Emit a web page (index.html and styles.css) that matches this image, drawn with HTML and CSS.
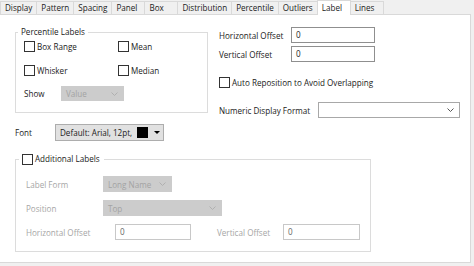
FILE: index.html
```html
<!DOCTYPE html>
<html lang="en">
<head>
    <meta charset="UTF-8">
    <meta name="viewport" content="width=device-width, initial-scale=1.0">
    <title>Box Chart Options - Label</title>
    <link rel="stylesheet" href="styles.css">
</head>
<body>
    <div id="tabs">
        <div class="tab">Display</div>
        <div class="tab">Pattern</div>
        <div class="tab">Spacing</div>
        <div class="tab">Panel</div>
        <div class="tab">Box</div>
        <div class="tab">Distribution</div>
        <div class="tab">Percentile</div>
        <div class="tab">Outliers</div>
        <div class="tab active">Label</div>
        <div class="tab">Lines</div>
    </div>

    <div id="page">
        <div class="top">
            <fieldset class="group percentile">
                <legend>Percentile Labels</legend>
                <div class="checks">
                    <label class="check"><span class="box"></span>Box Range</label>
                    <label class="check"><span class="box"></span>Mean</label>
                    <label class="check"><span class="box"></span>Whisker</label>
                    <label class="check"><span class="box"></span>Median</label>
                </div>
                <div class="show-row">
                    <span class="show-label">Show</span>
                    <div class="combo disabled combo-value">
                        <span>Value</span>
                        <svg width="7" height="4" viewBox="0 0 7 4"><path d="M0.5 0.5 L3.5 3.5 L6.5 0.5" fill="none" stroke="currentColor"/></svg>
                    </div>
                </div>
            </fieldset>

            <div class="side">
                <div class="field-row">
                    <span class="side-label">Horizontal Offset</span>
                    <div class="textbox offset">0</div>
                </div>
                <div class="field-row">
                    <span class="side-label">Vertical Offset</span>
                    <div class="textbox offset">0</div>
                </div>
                <label class="check auto"><span class="box"></span>Auto Reposition to Avoid Overlapping</label>
                <div class="field-row numeric">
                    <span class="numeric-label">Numeric Display Format</span>
                    <div class="combo combo-format">
                        <span></span>
                        <svg width="7" height="4" viewBox="0 0 7 4"><path d="M0.5 0.5 L3.5 3.5 L6.5 0.5" fill="none" stroke="currentColor"/></svg>
                    </div>
                </div>
            </div>
        </div>

        <div class="font-row">
            <span class="font-label">Font</span>
            <div class="font-button">
                <span>Default: Arial, 12pt,</span>
                <span class="swatch"></span>
                <span class="caret"></span>
            </div>
        </div>

        <fieldset class="group additional">
            <legend><label class="check"><span class="box"></span>Additional Labels</label></legend>
            <div class="form-grid">
                <span class="muted">Label Form</span>
                <div class="combo disabled combo-form">
                    <span>Long Name</span>
                    <svg width="7" height="4" viewBox="0 0 7 4"><path d="M0.5 0.5 L3.5 3.5 L6.5 0.5" fill="none" stroke="currentColor"/></svg>
                </div>
                <span class="muted">Position</span>
                <div class="combo disabled combo-position">
                    <span>Top</span>
                    <svg width="7" height="4" viewBox="0 0 7 4"><path d="M0.5 0.5 L3.5 3.5 L6.5 0.5" fill="none" stroke="currentColor"/></svg>
                </div>
            </div>
            <div class="offset-row">
                <span class="muted h-label">Horizontal Offset</span>
                <div class="textbox disabled-box h-input">0</div>
                <span class="muted v-label">Vertical Offset</span>
                <div class="textbox disabled-box v-input">0</div>
            </div>
        </fieldset>
    </div>
</body>
</html>
```

FILE: styles.css
```css
body {
    margin: 0;
    width: 474px;
    height: 266px;
    background: #f0f0f0;
    font-family: "Open Sans", "Noto Sans", sans-serif;
    font-size: 8.1px;
    color: #1a1a1a;
    white-space: nowrap;
    overflow: hidden;
}

#tabs {
    display: flex;
    align-items: flex-end;
    height: 14px;
}

.tab {
    box-sizing: border-box;
    height: 13px;
    line-height: 12px;
    min-width: 34px;
    padding: 0 4px;
    border: 1px solid #d9d9d9;
    border-bottom: none;
    margin-right: -1px;
    background: #f0f0f0;
}

.tab.active {
    height: 15px;
    line-height: 13px;
    background: #fff;
    margin-bottom: -1px;
    position: relative;
    z-index: 1;
}

#page {
    box-sizing: border-box;
    width: 471px;
    height: 249px;
    background: #fff;
    border: 1px solid #d9d9d9;
    border-left: none;
    padding: 10px 0 0 15px;
}

.top {
    display: flex;
    align-items: flex-start;
    height: 88px;
}

.group {
    margin: 0;
    border: 1px solid #dcdcdc;
    min-width: 0;
}

.group legend {
    padding: 0 3px;
    margin-left: -6px;
    line-height: 14px;
}

.percentile {
    box-sizing: border-box;
    width: 193px;
    height: 88px;
    padding: 0 8px;
}

.checks {
    display: grid;
    grid-template-columns: 94px auto;
    row-gap: 10px;
}

.check {
    display: flex;
    align-items: center;
    height: 14px;
}

.box {
    box-sizing: border-box;
    width: 11px;
    height: 11px;
    border: 1px solid #333;
    background: #fff;
    margin-right: 2px;
}

.show-row {
    display: flex;
    align-items: center;
    margin-top: 9px;
}

.show-label {
    width: 37px;
}

.combo {
    box-sizing: border-box;
    display: flex;
    align-items: center;
    justify-content: space-between;
    height: 16px;
    padding: 0 5px 0 4px;
    border: 1px solid #7a7a7a;
    background: #fff;
    color: #555;
}

.combo.disabled {
    border-color: #cccccc;
    background: #cccccc;
    color: #a3a3a3;
}

.combo-value {
    width: 63px;
    height: 15px;
}

.combo-format {
    width: 142px;
    border-color: #a8a8a8;
}

.combo-form {
    width: 69px;
    color: #666;
}

.combo-position {
    width: 119px;
    color: #666;
}

.combo.disabled svg {
    color: #b0b0b0;
}

.side {
    margin: 2px 0 0 11px;
    display: flex;
    flex-direction: column;
}

.field-row {
    display: flex;
    align-items: center;
}

.field-row + .field-row {
    margin-top: 3px;
}

.side-label {
    width: 72px;
}

.textbox {
    box-sizing: border-box;
    height: 16px;
    line-height: 14px;
    padding-left: 4px;
    border: 1px solid #8f8f8f;
    background: #fff;
}

.offset {
    width: 84px;
}

.auto {
    margin-top: 13px;
}

.field-row.numeric {
    margin-top: 13px;
}

.numeric-label {
    width: 99px;
}

.font-row {
    display: flex;
    align-items: center;
    margin-top: 11px;
}

.font-label {
    width: 40px;
}

.font-button {
    box-sizing: border-box;
    display: flex;
    align-items: center;
    width: 109px;
    height: 17px;
    padding-left: 4px;
    border: 1px solid #adadad;
    background: #e1e1e1;
}

.swatch {
    width: 11px;
    height: 11px;
    background: #000;
    margin-left: 5px;
}

.caret {
    width: 0;
    height: 0;
    margin-left: 6px;
    border-left: 3px solid transparent;
    border-right: 3px solid transparent;
    border-top: 3px solid #000;
}

.additional {
    box-sizing: border-box;
    width: 356px;
    height: 100px;
    margin-top: 11px;
    padding: 0 10px;
}

.additional legend {
    margin-left: -7px;
    padding: 0 4px 0 3px;
}

.muted {
    color: #a6a6a6;
}

.form-grid {
    display: grid;
    grid-template-columns: 77px auto;
    row-gap: 8px;
    align-items: center;
    justify-items: start;
    margin-top: 10px;
}

.offset-row {
    display: flex;
    align-items: center;
    margin-top: 8px;
}

.h-label {
    width: 89px;
}

.disabled-box {
    border-color: #c8c8c8;
    color: #666;
}

.h-input {
    width: 76px;
}

.v-label {
    width: 66px;
    margin-left: 26px;
}

.v-input {
    width: 77px;
}
```
